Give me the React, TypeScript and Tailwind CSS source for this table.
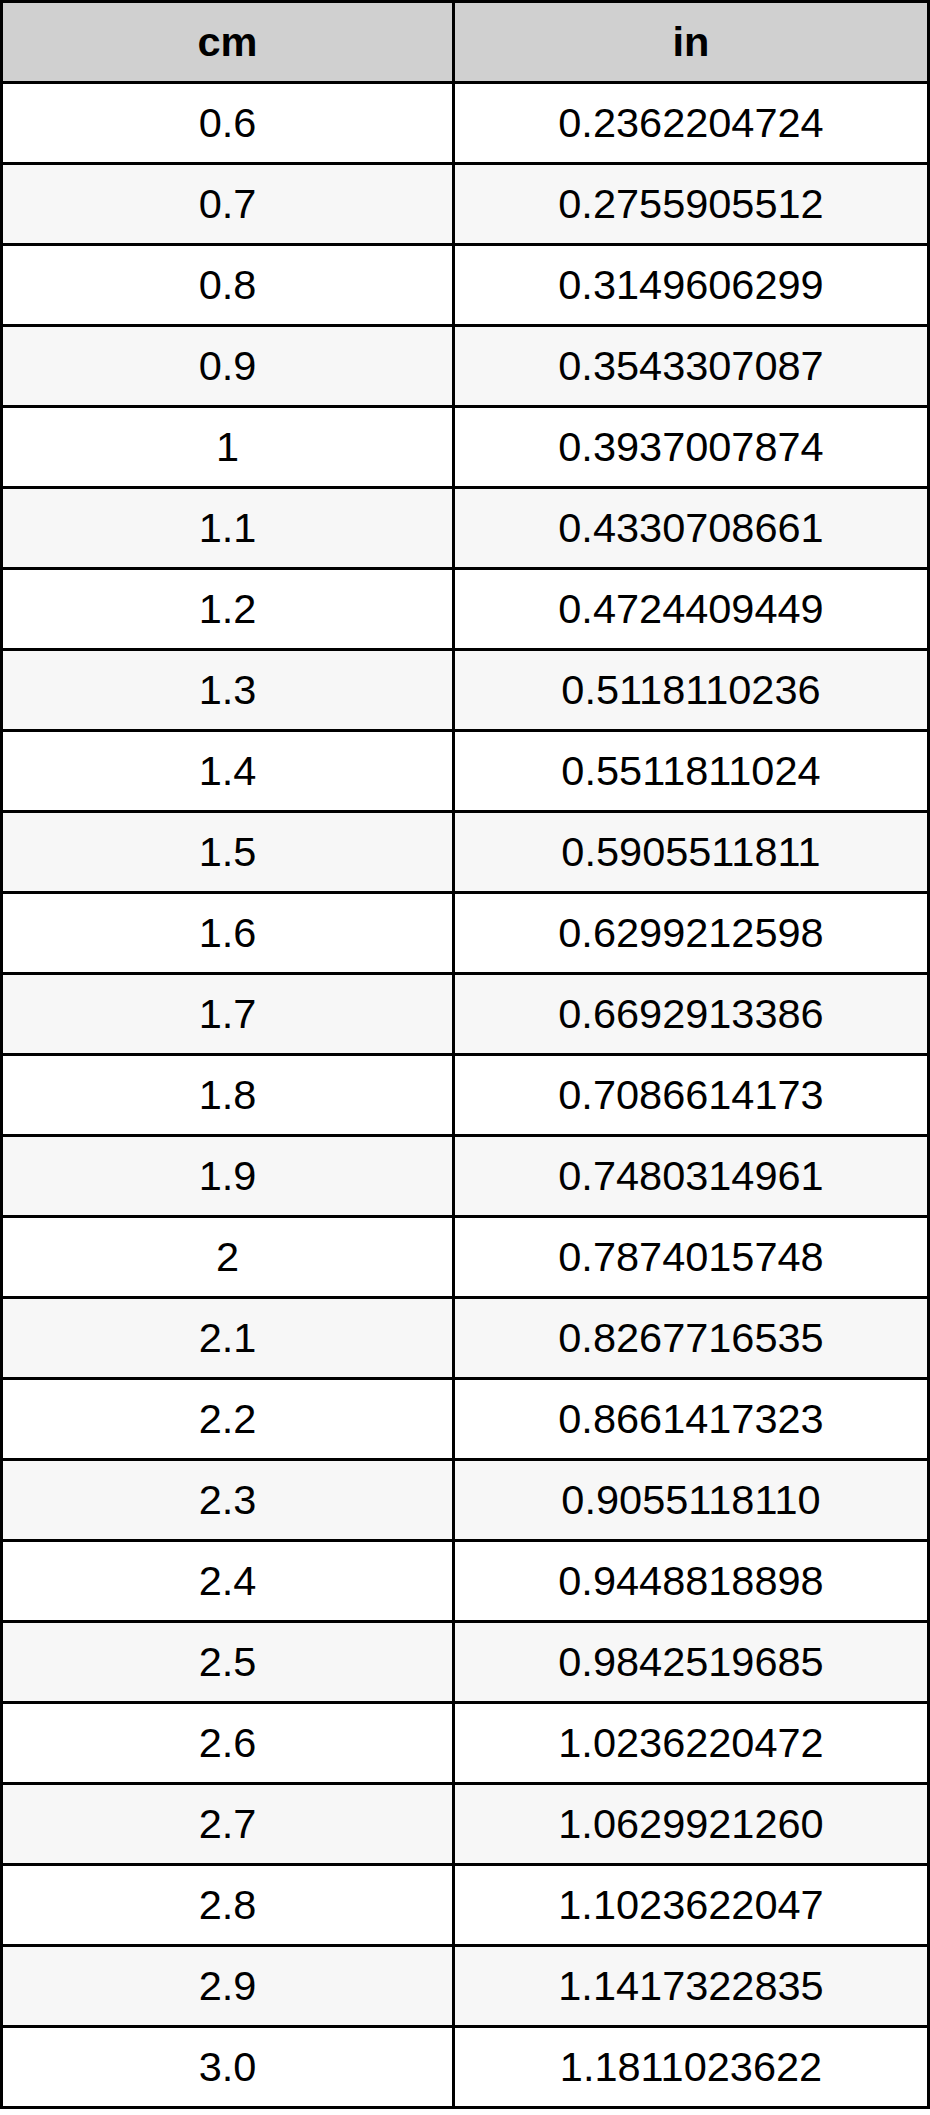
const rows: [string, string][] = [
  ['0.6', '0.2362204724'],
  ['0.7', '0.2755905512'],
  ['0.8', '0.3149606299'],
  ['0.9', '0.3543307087'],
  ['1', '0.3937007874'],
  ['1.1', '0.4330708661'],
  ['1.2', '0.4724409449'],
  ['1.3', '0.5118110236'],
  ['1.4', '0.5511811024'],
  ['1.5', '0.5905511811'],
  ['1.6', '0.6299212598'],
  ['1.7', '0.6692913386'],
  ['1.8', '0.7086614173'],
  ['1.9', '0.7480314961'],
  ['2', '0.7874015748'],
  ['2.1', '0.8267716535'],
  ['2.2', '0.8661417323'],
  ['2.3', '0.9055118110'],
  ['2.4', '0.9448818898'],
  ['2.5', '0.9842519685'],
  ['2.6', '1.0236220472'],
  ['2.7', '1.0629921260'],
  ['2.8', '1.1023622047'],
  ['2.9', '1.1417322835'],
  ['3.0', '1.1811023622'],
]

function Row({ cm, inch, className }: { cm: string; inch: string; className: string }) {
  return (
    <div className={`flex h-[81px] border-b-[3px] border-black ${className}`}>
      <div className="flex w-[452px] items-center justify-center border-r-[3px] border-black">{cm}</div>
      <div className="flex flex-1 items-center justify-center border-r-[3px] border-black">{inch}</div>
    </div>
  )
}

export default function App() {
  return (
    <div className="w-[930px] bg-white">
      <div className="border-l-[3px] border-t-[3px] border-black text-[41.5px] leading-none text-black [font-family:'Liberation_Sans',Arial,sans-serif]">
        <Row cm="cm" inch="in" className="bg-[#d0d0d0] font-bold" />
        {rows.map(([cm, inch], i) => (
          <Row key={cm} cm={cm} inch={inch} className={i % 2 === 0 ? 'bg-white' : 'bg-[#f7f7f7]'} />
        ))}
      </div>
    </div>
  )
}
